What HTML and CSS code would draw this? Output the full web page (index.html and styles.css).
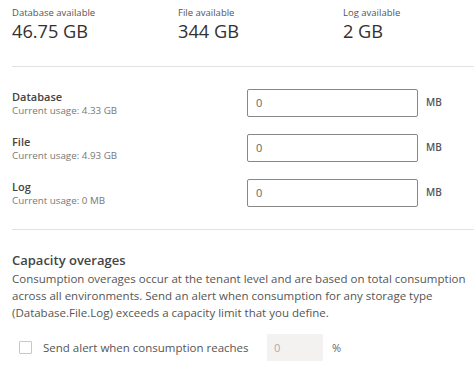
FILE: index.html
```html
<!DOCTYPE html>
<html>
<head>
<meta charset="utf-8">
<link rel="stylesheet" href="styles.css">
</head>
<body>
<div class="page">
  <div class="stats">
    <div class="stat"><div class="stat-label">Database available</div><div class="stat-value">46.75 GB</div></div>
    <div class="stat"><div class="stat-label">File available</div><div class="stat-value">344 GB</div></div>
    <div class="stat"><div class="stat-label">Log available</div><div class="stat-value">2 GB</div></div>
  </div>
  <hr class="divider top-divider">
  <div class="limits">
    <div class="limit-row">
      <div class="limit-info"><div class="limit-name">Database</div><div class="limit-usage">Current usage: 4.33 GB</div></div>
      <div class="limit-input">0</div>
      <div class="unit">MB</div>
    </div>
    <div class="limit-row">
      <div class="limit-info"><div class="limit-name">File</div><div class="limit-usage">Current usage: 4.93 GB</div></div>
      <div class="limit-input">0</div>
      <div class="unit">MB</div>
    </div>
    <div class="limit-row">
      <div class="limit-info"><div class="limit-name">Log</div><div class="limit-usage">Current usage: 0 MB</div></div>
      <div class="limit-input">0</div>
      <div class="unit">MB</div>
    </div>
  </div>
  <hr class="divider bottom-divider">
  <div class="overages">
    <div class="over-title">Capacity overages</div>
    <p class="over-text">Consumption overages occur at the tenant level and are based on total consumption across all environments. Send an alert when consumption for any storage type (Database.File.Log) exceeds a capacity limit that you define.</p>
    <div class="alert-row">
      <span class="checkbox"></span>
      <span class="alert-label">Send alert when consumption reaches</span>
      <span class="pct-input">0</span>
      <span class="pct">%</span>
    </div>
  </div>
</div>
</body>
</html>
```

FILE: styles.css
```css
html, body { margin: 0; padding: 0; background: #fff; }
body { font-family: "Open Sans", "Noto Sans", sans-serif; color: #323130; width: 474px; height: 372px; overflow: hidden; }
.page { padding: 6px 0 0 12px; }
.stats { display: grid; grid-template-columns: 166px 165px 1fr; }
.stat-label { font-size: 9.5px; line-height: 13px; color: #555; }
.stat-value { font-size: 18.2px; line-height: 25px; color: #323130; }
.divider { border: 0; border-top: 1px solid #e1e1e1; margin: 0; }
.top-divider { margin-top: 22px; }
.limits { display: flex; flex-direction: column; gap: 17px; padding-top: 22px; }
.limit-row { display: flex; align-items: flex-start; height: 28px; }
.limit-info { width: 235px; padding-top: 1px; }
.limit-name { font-size: 11px; line-height: 14px; font-weight: 600; color: #444; }
.limit-usage { font-size: 9.8px; line-height: 14px; color: #777; }
.limit-input { box-sizing: border-box; width: 171px; height: 28px; border: 1px solid #8a8886; border-radius: 2px; font-size: 11px; line-height: 26px; padding-left: 8px; color: #666; }
.unit { font-size: 10px; font-weight: 600; color: #555; margin-left: 8px; padding-top: 6px; }
.bottom-divider { margin-top: 22px; }
.overages { padding-top: 22px; }
.over-title { font-size: 13px; line-height: 17px; font-weight: 600; color: #444; }
.over-text { margin: 1px 0 0; font-size: 11.5px; line-height: 17px; color: #555; width: 460px; }
.alert-row { display: flex; align-items: center; margin-top: 12px; padding-left: 7px; height: 28px; }
.checkbox { box-sizing: border-box; width: 13px; height: 13px; border: 1px solid #c8c8c8; border-radius: 1px; }
.alert-label { font-size: 11.5px; color: #555; margin-left: 11px; width: 224px; }
.pct-input { box-sizing: border-box; width: 56px; height: 27px; background: #f3f2f1; font-size: 11px; color: #aaa; padding-left: 7px; line-height: 27px; }
.pct { font-size: 11px; color: #666; margin-left: 9px; }
```
